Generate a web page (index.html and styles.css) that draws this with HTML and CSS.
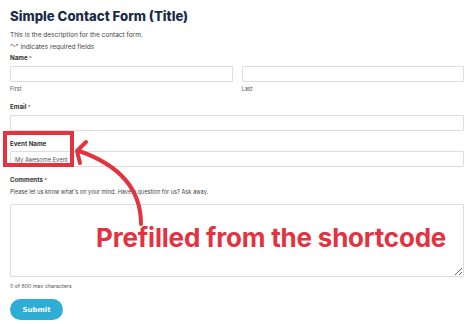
FILE: index.html
```html
<!DOCTYPE html>
<html lang="en">
<head>
  <meta charset="UTF-8" />
  <meta name="viewport" content="width=device-width, initial-scale=1" />
  <title>Simple Contact Form</title>
  <link rel="stylesheet" href="styles.css">
</head>
<body>

<div class="page">
  <h1>Simple Contact Form (Title)</h1>
  <p class="desc">This is the description for the contact form.</p>
  <p class="req-note">"<span class="star">*</span>" indicates required fields</p>

  <div class="field field-name">
    <label>Name <span class="star">*</span></label>
    <div class="name-row">
      <div class="name-part">
        <input type="text" />
        <span class="sub">First</span>
      </div>
      <div class="name-part">
        <input type="text" />
        <span class="sub">Last</span>
      </div>
    </div>
  </div>

  <div class="field">
    <label>Email <span class="star">*</span></label>
    <input type="text" />
  </div>

  <div class="field">
    <label>Event Name</label>
    <input type="text" value="My Awesome Event" />
  </div>

  <div class="field">
    <label>Comments <span class="star">*</span></label>
    <span class="hint">Please let us know what's on your mind. Have a question for us? Ask away.</span>
    <textarea></textarea>
    <span class="sub counter">0 of 600 max characters</span>
  </div>

  <button class="submit">Submit</button>

  <!-- annotation -->
  <div class="callout-box"></div>
  <svg class="callout-arrow" width="474" height="324" viewBox="0 0 474 324">
    <path d="M141 224 C141 196 128 168 79 151" />
    <path d="M86 142 L77 151 L80 163" />
  </svg>
  <div class="callout-text">Prefilled from the shortcode</div>
</div>

</body>
</html>
```

FILE: styles.css
```css
body {
  margin: 0;
  font-family: Inter, 'Liberation Sans', sans-serif;
  color: #333;
  background: #fff;
}

.page {
  position: relative;
  width: 454px;
  padding: 5px 10px 0;
}

h1 {
  margin: 0;
  font-family: Inter, sans-serif;
  font-size: 13.2px;
  line-height: 22px;
  font-weight: 800;
  color: #1b2c48;
}

.desc,
.req-note {
  margin: 0;
  font-size: 6.5px;
  line-height: 12px;
  color: #444;
}

.desc {
  margin-top: 2px;
}

.star {
  color: #c0392b;
  font-size: 5px;
}

.field {
  display: flex;
  flex-direction: column;
  margin-top: 8px;
}

.field-name {
  margin-top: 0;
}

.field label {
  font-size: 6.2px;
  line-height: 9px;
  font-weight: bold;
  color: #333;
  margin-bottom: 3px;
}

input,
textarea {
  box-sizing: border-box;
  width: 100%;
  height: 16px;
  margin: 0;
  padding: 0 4px;
  border: 1px solid #ddd;
  border-radius: 1px;
  font-family: inherit;
  font-size: 5.7px;
  color: #555;
  background: #fff;
}

textarea {
  height: 73px;
  resize: vertical;
}

.name-row {
  display: flex;
  gap: 9px;
}

.name-part {
  flex: 1;
  display: flex;
  flex-direction: column;
}

.sub {
  font-size: 5.6px;
  line-height: 10px;
  margin-top: 2px;
  color: #555;
}

.counter {
  margin-top: 4px;
  font-size: 5.3px;
}

.hint {
  font-size: 5.6px;
  line-height: 9px;
  color: #444;
  margin-bottom: 7px;
}

.submit {
  margin-top: 8px;
  width: 53px;
  height: 21px;
  border: none;
  border-radius: 11px;
  background: #2eaed4;
  color: #fff;
  font-family: 'DejaVu Sans', sans-serif;
  font-weight: bold;
  font-size: 7px;
}

.callout-box {
  position: absolute;
  left: 3px;
  top: 131px;
  width: 63px;
  height: 28px;
  border: 4px solid #e3333f;
}

.callout-arrow {
  position: absolute;
  left: 0;
  top: 0;
  pointer-events: none;
}

.callout-arrow path {
  fill: none;
  stroke: #e3333f;
  stroke-width: 4;
  stroke-linecap: round;
  stroke-linejoin: round;
}

.callout-text {
  position: absolute;
  left: 96px;
  top: 221px;
  font-family: Inter, sans-serif;
  font-weight: bold;
  font-size: 26px;
  line-height: 34px;
  letter-spacing: -0.2px;
  color: #e3333f;
  white-space: nowrap;
}
```
